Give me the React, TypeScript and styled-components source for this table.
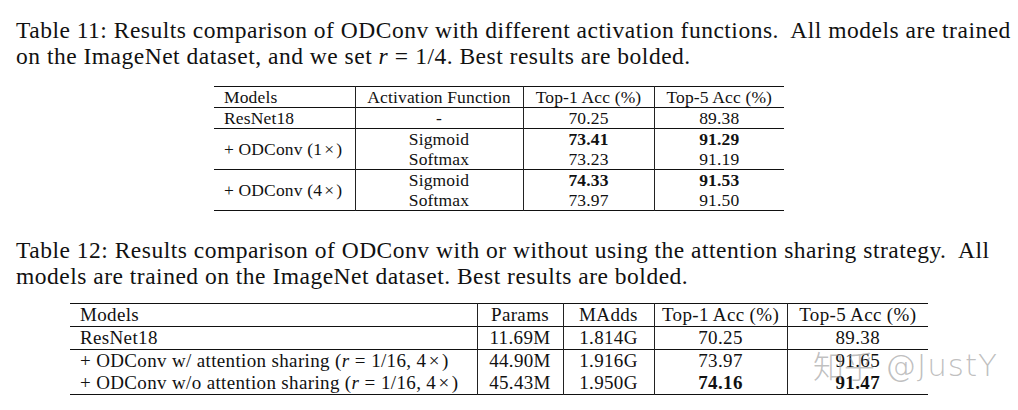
import React from "react";
import styled, { createGlobalStyle } from "styled-components";

const GlobalStyle = createGlobalStyle`
  html, body {
    margin: 0;
    padding: 0;
    background: #fff;
  }
  body {
    font-family: "Liberation Serif", "Times New Roman", serif;
    color: #111;
  }
`;

const Page = styled.div`
  position: relative;
  width: 1018px;
  height: 410px;
  overflow: hidden;
  padding: 17px 0 0 16px;
  box-sizing: border-box;
`;

const Column = styled.div`
  width: 966px;
`;

const Caption = styled.div<{ $top: number; $gap: number }>`
  margin: ${(p) => p.$top}px 0 ${(p) => p.$gap}px 0;
  font-size: 23.5px;
  line-height: 26px;
  letter-spacing: 0.5px;
`;

// first caption line is stretched edge to edge, the last one is ragged
const Line = styled.div<{ $full?: boolean }>`
  white-space: nowrap;
  text-align: ${(p) => (p.$full ? "justify" : "left")};
  text-align-last: ${(p) => (p.$full ? "justify" : "left")};
`;

const Var = styled.i`
  font-style: italic;
`;

const Op = styled.span`
  padding: 0 0.28em;
`;

const Times = styled.span`
  padding: 0 0.12em;
`;

const Table = styled.table<{ $size: number; $row: number; $track: number }>`
  margin: 0 auto;
  border-collapse: collapse;
  font-size: ${(p) => p.$size}px;
  letter-spacing: ${(p) => p.$track}px;
  line-height: ${(p) => p.$row}px;
  border-top: 1.5px solid #111;
  border-bottom: 1.5px solid #111;
  white-space: nowrap;
`;

const Row = styled.tr<{ $rule?: boolean }>`
  border-top: ${(p) => (p.$rule ? "1.5px solid #111" : "none")};
`;

const Cell = styled.td<{ $w: number; $left?: boolean; $bold?: boolean; $edge?: boolean }>`
  width: ${(p) => p.$w}px;
  padding: 0 0 0 ${(p) => (p.$left ? "10px" : "0")};
  text-align: ${(p) => (p.$left ? "left" : "center")};
  vertical-align: middle;
  font-weight: ${(p) => (p.$bold ? 700 : 400)};
  border-left: ${(p) => (p.$edge ? "1px solid #222" : "none")};
  box-sizing: border-box;
`;

const Watermark = styled.div`
  position: absolute;
  left: 813px;
  top: 345px;
  display: flex;
  align-items: center;
  gap: 10px;
  color: rgba(150, 150, 150, 0.6);
  font-size: 31px;
  line-height: 40px;
  pointer-events: none;
`;

const MarkCjk = styled.span`
  font-family: "Noto Sans CJK SC", sans-serif;
  font-weight: 300;
`;

const MarkName = styled.span`
  font-family: "DejaVu Sans", sans-serif;
  font-weight: 200;
  letter-spacing: 1px;
`;

const t1 = [141, 168, 131, 130];
const t2 = [407, 86, 91, 133, 141];

export default function App() {
  return (
    <Page>
      <GlobalStyle />
      <Column>
        <Caption $top={0} $gap={17}>
          <Line $full>
            Table 11: Results comparison of ODConv with different activation functions.&nbsp; All models are trained
          </Line>
          <Line>
            on the ImageNet dataset, and we set <Var>r</Var>
            <Op>=</Op>1/4. Best results are bolded.
          </Line>
        </Caption>

        <Table $size={17.5} $row={20} $track={0.15}>
          <tbody>
            <Row>
              <Cell $w={t1[0]} $left>Models</Cell>
              <Cell $w={t1[1]} $edge>Activation Function</Cell>
              <Cell $w={t1[2]} $edge>Top-1 Acc (%)</Cell>
              <Cell $w={t1[3]} $edge>Top-5 Acc (%)</Cell>
            </Row>
            <Row $rule>
              <Cell $w={t1[0]} $left>ResNet18</Cell>
              <Cell $w={t1[1]} $edge>-</Cell>
              <Cell $w={t1[2]} $edge>70.25</Cell>
              <Cell $w={t1[3]} $edge>89.38</Cell>
            </Row>
            <Row $rule>
              <Cell $w={t1[0]} $left rowSpan={2}>+ ODConv (1<Times>×</Times>)</Cell>
              <Cell $w={t1[1]} $edge>Sigmoid</Cell>
              <Cell $w={t1[2]} $edge $bold>73.41</Cell>
              <Cell $w={t1[3]} $edge $bold>91.29</Cell>
            </Row>
            <Row>
              <Cell $w={t1[1]} $edge>Softmax</Cell>
              <Cell $w={t1[2]} $edge>73.23</Cell>
              <Cell $w={t1[3]} $edge>91.19</Cell>
            </Row>
            <Row $rule>
              <Cell $w={t1[0]} $left rowSpan={2}>+ ODConv (4<Times>×</Times>)</Cell>
              <Cell $w={t1[1]} $edge>Sigmoid</Cell>
              <Cell $w={t1[2]} $edge $bold>74.33</Cell>
              <Cell $w={t1[3]} $edge $bold>91.53</Cell>
            </Row>
            <Row>
              <Cell $w={t1[1]} $edge>Softmax</Cell>
              <Cell $w={t1[2]} $edge>73.97</Cell>
              <Cell $w={t1[3]} $edge>91.50</Cell>
            </Row>
          </tbody>
        </Table>

        <Caption $top={26} $gap={14}>
          <Line $full>
            Table 12: Results comparison of ODConv with or without using the attention sharing strategy.&nbsp; All
          </Line>
          <Line>models are trained on the ImageNet dataset. Best results are bolded.</Line>
        </Caption>

        <Table $size={19} $row={22} $track={0.35}>
          <tbody>
            <Row>
              <Cell $w={t2[0]} $left>Models</Cell>
              <Cell $w={t2[1]} $edge>Params</Cell>
              <Cell $w={t2[2]} $edge>MAdds</Cell>
              <Cell $w={t2[3]} $edge>Top-1 Acc (%)</Cell>
              <Cell $w={t2[4]} $edge>Top-5 Acc (%)</Cell>
            </Row>
            <Row $rule>
              <Cell $w={t2[0]} $left>ResNet18</Cell>
              <Cell $w={t2[1]} $edge>11.69M</Cell>
              <Cell $w={t2[2]} $edge>1.814G</Cell>
              <Cell $w={t2[3]} $edge>70.25</Cell>
              <Cell $w={t2[4]} $edge>89.38</Cell>
            </Row>
            <Row $rule>
              <Cell $w={t2[0]} $left>
                + ODConv w/ attention sharing (<Var>r</Var>
                <Op>=</Op>1/16, 4<Times>×</Times>)
              </Cell>
              <Cell $w={t2[1]} $edge>44.90M</Cell>
              <Cell $w={t2[2]} $edge>1.916G</Cell>
              <Cell $w={t2[3]} $edge>73.97</Cell>
              <Cell $w={t2[4]} $edge>91.65</Cell>
            </Row>
            <Row>
              <Cell $w={t2[0]} $left>
                + ODConv w/o attention sharing (<Var>r</Var>
                <Op>=</Op>1/16, 4<Times>×</Times>)
              </Cell>
              <Cell $w={t2[1]} $edge>45.43M</Cell>
              <Cell $w={t2[2]} $edge>1.950G</Cell>
              <Cell $w={t2[3]} $edge $bold>74.16</Cell>
              <Cell $w={t2[4]} $edge $bold>91.47</Cell>
            </Row>
          </tbody>
        </Table>
      </Column>

      <Watermark>
        <MarkCjk>知乎</MarkCjk>
        <MarkName>@JustY</MarkName>
      </Watermark>
    </Page>
  );
}
